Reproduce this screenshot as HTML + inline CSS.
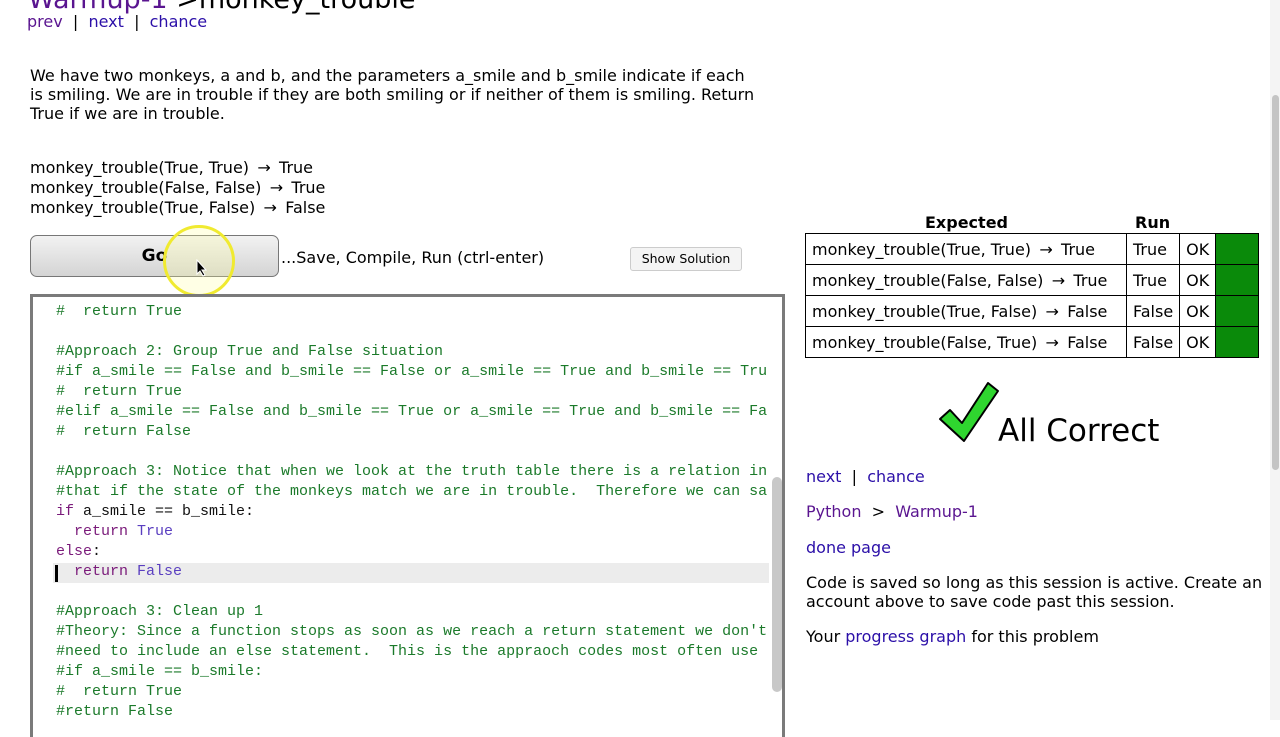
<!DOCTYPE html>
<html><head><meta charset="utf-8"><style>
body{margin:0;width:1280px;height:720px;overflow:hidden;background:#fff;font-family:"DejaVu Sans",sans-serif;color:#000;position:relative}
.a{position:absolute;white-space:nowrap}
a,.lk{color:#2b0fa8;text-decoration:none}
.v{color:#5a1590}
.ar{display:inline-block;width:30px;text-align:center}
.code{position:absolute;left:30px;top:294px;width:749px;height:440px;border:3px solid #7a7a7a;border-bottom:none;overflow:hidden;background:#fff}
.ln{position:absolute;left:23px;font-family:"Liberation Mono",monospace;font-size:15px;white-space:pre;color:#1b7a2a;line-height:20px}
.kw{color:#7a1a7a}.bl{color:#5a3fc0}.bk{color:#111}
table{position:absolute;left:805px;top:233px;border-collapse:collapse;font-size:16px}
td{border:1.5px solid #000;height:30px;padding:0 6px}
</style></head><body>
<div class="a" style="left:28px;top:-16px;font-size:27px"><span class="v">Warmup-1</span> &gt;monkey_trouble</div>
<div class="a" style="left:27px;top:12px;font-size:16px"><span class="v">prev</span> &nbsp;| &nbsp;<a>next</a> &nbsp;| &nbsp;<a>chance</a></div>
<div class="a" style="left:30px;top:66px;font-size:16px;line-height:19px">We have two monkeys, a and b, and the parameters a_smile and b_smile indicate if each<br>is smiling. We are in trouble if they are both smiling or if neither of them is smiling. Return<br>True if we are in trouble.</div>
<div class="a" style="left:30px;top:158px;font-size:16px;line-height:20px">monkey_trouble(True, True)<span class="ar">→</span>True<br>monkey_trouble(False, False)<span class="ar">→</span>True<br>monkey_trouble(True, False)<span class="ar">→</span>False</div>
<div class="a" style="left:30px;top:235px;width:247px;height:40px;border:1px solid #777;border-radius:7px;background:linear-gradient(#f2f2f2,#d4d4d4);text-align:center;font-weight:bold;font-size:17px;line-height:41px">Go</div>
<div class="a" style="left:163px;top:225px;width:72px;height:72px;border:3px solid #f0ea30;border-radius:50%;box-sizing:border-box;background:rgba(255,255,150,0.25)"></div>
<div class="a" style="left:281px;top:248px;font-size:16px">...Save, Compile, Run (ctrl-enter)</div>
<div class="a" style="left:630px;top:247px;width:110px;height:22px;border:1px solid #ccc;border-radius:3px;background:#f4f4f4;font-size:12.5px;text-align:center;line-height:22px">Show Solution</div>
<div class="code">
<div style="position:absolute;left:20px;top:266px;width:716px;height:20px;background:#ececec"></div>
<div style="position:absolute;left:739px;top:180px;width:10px;height:215px;background:#c8c8c8;border-radius:5px"></div>
<div style="position:absolute;left:22px;top:268px;width:3px;height:17px;background:#000"></div>
<div class="ln" style="top:5px">#  return True

#Approach 2: Group True and False situation
#if a_smile == False and b_smile == False or a_smile == True and b_smile == Tru
#  return True
#elif a_smile == False and b_smile == True or a_smile == True and b_smile == Fa
#  return False

#Approach 3: Notice that when we look at the truth table there is a relation in
#that if the state of the monkeys match we are in trouble.  Therefore we can sa
<span class="kw">if</span><span class="bk"> a_smile == b_smile:</span>
  <span class="kw">return</span> <span class="bl">True</span>
<span class="kw">else</span><span class="bk">:</span>
  <span class="kw">return</span> <span class="bl">False</span>

#Approach 3: Clean up 1
#Theory: Since a function stops as soon as we reach a return statement we don't
#need to include an else statement.  This is the appraoch codes most often use
#if a_smile == b_smile:
#  return True
#return False</div>
</div>
<div class="a" style="left:925px;top:213px;font-size:16px;font-weight:bold">Expected</div>
<div class="a" style="left:1135px;top:213px;font-size:16px;font-weight:bold">Run</div>
<table>
<tr><td style="width:308px">monkey_trouble(True, True)<span class="ar">→</span>True</td><td>True</td><td>OK</td><td style="background:#0a8a0a;width:30px"></td></tr>
<tr><td>monkey_trouble(False, False)<span class="ar">→</span>True</td><td>True</td><td>OK</td><td style="background:#0a8a0a"></td></tr>
<tr><td>monkey_trouble(True, False)<span class="ar">→</span>False</td><td>False</td><td>OK</td><td style="background:#0a8a0a"></td></tr>
<tr><td>monkey_trouble(False, True)<span class="ar">→</span>False</td><td>False</td><td>OK</td><td style="background:#0a8a0a"></td></tr>
</table>
<svg class="a" style="left:938px;top:381px" width="62" height="64" viewBox="0 0 62 64"><path d="M2 38 L12 29 L24 42 L50 2 L60 10 L26 60 Z" fill="#2fd62f" stroke="#000" stroke-width="2" stroke-linejoin="round"/></svg>
<div class="a" style="left:998px;top:413px;font-size:31px">All Correct</div>
<div class="a" style="left:806px;top:467px;font-size:16px"><a>next</a> &nbsp;| &nbsp;<a>chance</a></div>
<div class="a" style="left:806px;top:502px;font-size:16px"><span class="v">Python</span> &nbsp;&gt; &nbsp;<span class="v">Warmup-1</span></div>
<div class="a" style="left:806px;top:538px;font-size:16px"><a>done page</a></div>
<div class="a" style="left:806px;top:573px;font-size:16px;line-height:19px">Code is saved so long as this session is active. Create an<br>account above to save code past this session.</div>
<div class="a" style="left:806px;top:627px;font-size:16px">Your <a>progress graph</a> for this problem</div>
<div class="a" style="left:1270px;top:0;width:10px;height:720px;background:#f4f4f4"></div>
<div class="a" style="left:1272px;top:95px;width:7px;height:375px;background:#c4c4c4;border-radius:4px"></div>
<svg class="a" style="left:196px;top:259px" width="12" height="18"><path d="M1 1 L1 15 L4 12 L7 17 L9 16 L6 11 L10 11 Z" fill="#000" stroke="#fff" stroke-width="1"/></svg>
</body></html>
